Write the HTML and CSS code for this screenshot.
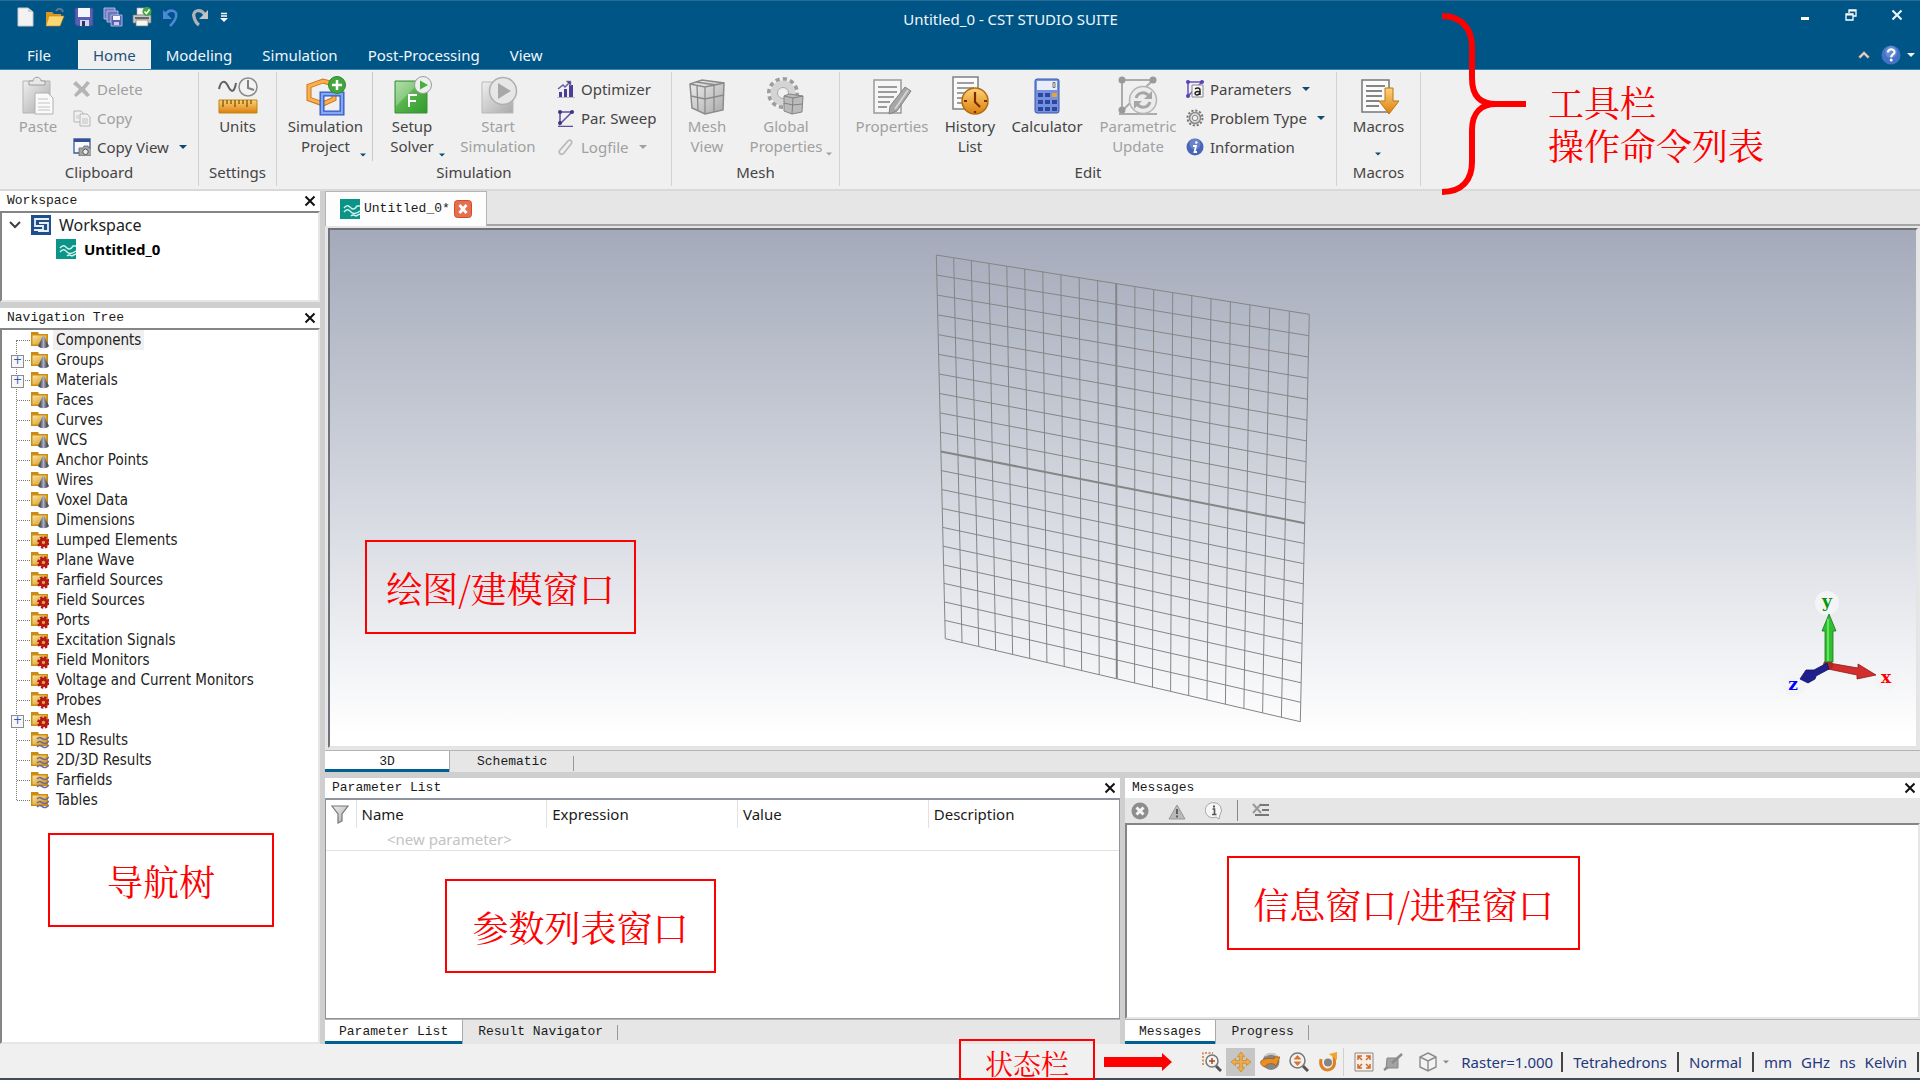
FILE: index.html
```html
<!DOCTYPE html>
<html lang="zh-CN">
<head>
<meta charset="utf-8">
<title>Untitled_0 - CST STUDIO SUITE</title>
<link rel="stylesheet" href="styles.css">
</head>
<body>
<svg class="sprite" aria-hidden="true">
  <defs>
    <linearGradient id="g-gold" x1="0" y1="0" x2="1" y2="1"><stop offset="0" stop-color="#fae7a4"/><stop offset="1" stop-color="#d3900f"/></linearGradient>
    <linearGradient id="g-grey" x1="0" y1="0" x2="1" y2="1"><stop offset="0" stop-color="#efefef"/><stop offset="1" stop-color="#a9a9a9"/></linearGradient>
    <linearGradient id="g-green" x1="0" y1="0" x2="1" y2="1"><stop offset="0" stop-color="#9ad68f"/><stop offset=".5" stop-color="#53b148"/><stop offset="1" stop-color="#2f9a2a"/></linearGradient>
    <linearGradient id="g-orange" x1="0" y1="0" x2="0" y2="1"><stop offset="0" stop-color="#ffd27a"/><stop offset="1" stop-color="#dc7f0c"/></linearGradient>
    <linearGradient id="g-cone" x1="0" y1="0" x2="1" y2="0"><stop offset="0" stop-color="#43444e"/><stop offset=".25" stop-color="#5c5e6c"/><stop offset=".5" stop-color="#aab0c8"/><stop offset=".75" stop-color="#5c5e6c"/><stop offset="1" stop-color="#3d3e48"/></linearGradient>
  </defs>
  <symbol id="i-new" viewBox="0 0 20 20"><path d="M2 1h10l5 4v14H2z" fill="#f2f2f2" stroke="#c9c9c9"/><path d="M12 1v4h5z" fill="#cfcfcf"/></symbol>
  <symbol id="i-open" viewBox="0 0 20 20"><path d="M1 18V5h6l2 2h7v11z" fill="#d9981d"/><path d="M4 9h15l-4 10H1z" fill="#fbd774" stroke="#c98a16" stroke-width=".6"/><path d="M11 4c2-3 6-3 7 1" fill="none" stroke="#5e7a92" stroke-width="2"/></symbol>
  <symbol id="i-save" viewBox="0 0 20 20"><path d="M1 1h18v18H3l-2-2z" fill="#5660b4" stroke="#3d4790"/><path d="M4 1h12v9H4z" fill="#f4f4fb"/><path d="M6 13h9v6H6z" fill="#d4d7ea"/><path d="M8 14h3v5H8z" fill="#2b336f"/></symbol>
  <symbol id="i-saveall" viewBox="0 0 20 20"><g stroke="#c6cbea" stroke-width=".8"><path d="M1 1h11v11H1z" fill="#6c76bd"/><path d="M4 4h11v11H4z" fill="#6c76bd"/><path d="M8 8h11v11H8z" fill="#5660b4"/></g><path d="M10 9h7v4h-7z" fill="#f4f4fb"/><path d="M11 15h5v3h-5z" fill="#c9cde8"/></symbol>
  <symbol id="i-print" viewBox="0 0 20 20"><path d="M5 1h9v7H5z" fill="#f5f5f5" stroke="#aaa" stroke-width=".6"/><path d="M1 8h18v8H1z" fill="#c9c9c9" stroke="#777" stroke-width=".7"/><path d="M4 13h12v6H4z" fill="#f7f7ef" stroke="#777" stroke-width=".7"/><path d="M3 10h14v2H3z" fill="#666"/><circle cx="15" cy="4.500" r="4.500" fill="#45a640"/><path d="M12.500 4.500l2 2 3-4" fill="none" stroke="#fff" stroke-width="1.500"/></symbol>
  <symbol id="i-undo" viewBox="0 0 20 20"><path d="M4 8C8 1 17 3 15 10c-1 4-3 6-6 9" fill="none" stroke="#4f86da" stroke-width="2.600"/><path d="M2 3v9h9z" fill="#4f86da"/></symbol>
  <symbol id="i-redo" viewBox="0 0 20 20"><path d="M15 8C11 1 2 3 4 10c1 4 2 6 5 8" fill="none" stroke="#b2b2b2" stroke-width="3.200"/><path d="M18 3v9H9z" fill="#c4c4c4"/></symbol>
  <symbol id="i-more" viewBox="0 0 10 10"><path d="M2 1.500h6M2 4h6" stroke="#fff" stroke-width="1.300"/><path d="M1 6h8l-4 4z" fill="#fff"/></symbol>
  <symbol id="i-min" viewBox="0 0 12 12"><path d="M2 8h8v3H2z" fill="#fff"/></symbol>
  <symbol id="i-restore" viewBox="0 0 12 12"><path d="M4 4V1h7v6H8M1 5h7v6H1z" fill="none" stroke="#fff" stroke-width="1.300"/><path d="M4 1h7v1.500H4zM1 5h7v1.500H1z" fill="#fff"/></symbol>
  <symbol id="i-x" viewBox="0 0 12 12"><path d="M1.500 1.500l9 9m0-9l-9 9" fill="none" stroke="currentColor" stroke-width="2"/></symbol>
  <symbol id="i-collapse" viewBox="0 0 12 8"><path d="M1 7l5-5 5 5" fill="none" stroke="#5f5f5f" stroke-width="3.500"/><path d="M1.500 6.500L6 2l4.500 4.500" fill="none" stroke="#cfd9e0" stroke-width="2"/></symbol>
  <symbol id="i-help" viewBox="0 0 20 20"><circle cx="10" cy="10" r="9.500" fill="#4472c4"/><circle cx="10" cy="7" r="6" fill="#7b9ddc" opacity=".6"/><path d="M7 7.500c0-4 6.500-4 6.500-.5 0 2.500-3.300 2.300-3.300 5.200" fill="none" stroke="#fff" stroke-width="2.200"/><circle cx="10.200" cy="15" r="1.500" fill="#fff"/></symbol>
  <symbol id="i-arrow" viewBox="0 0 8 4"><path d="M0 0h8L4 4z" fill="currentColor"/></symbol>
  <symbol id="i-paste" viewBox="0 0 40 40"><path d="M5 5h27v32H5z" fill="url(#g-grey)" stroke="#b5b5b5"/><path d="M11 9V5h4c0-5 8-5 8 0h4v4z" fill="#e8e8e8" stroke="#9d9d9d"/><path d="M17 17h13l5 5v16H17z" fill="#fafafa" stroke="#b0b0b0"/><path d="M20 23h10m-10 4h12m-12 4h12m-12 3h12" stroke="#c2c2c2"/></symbol>
  <symbol id="i-delete" viewBox="0 0 18 18"><path d="M3 1l6 6 5-6 3 2-5 6 5 6-3 2-5-5-6 5-2-2 5-6-6-5z" fill="#b4b4b4"/></symbol>
  <symbol id="i-copy" viewBox="0 0 18 18"><g fill="#f1f1f1" stroke="#b5b5b5"><path d="M1 2h7l3 3v8H1z"/><path d="M7 5h7l3 3v9H7z"/></g><path d="M3 7h3m-3 2h3m3 1h6m-6 2h6m-6 2h6" stroke="#c2c2c2"/></symbol>
  <symbol id="i-copyview" viewBox="0 0 18 18"><path d="M1 1h16v14H1z" fill="#f6f8fc" stroke="#3f5a9e" stroke-width="1.300"/><path d="M1 1h16v3H1z" fill="#35508f"/><path d="M6 10h4l1-2h4l1 2h3v8H6z" fill="#a5a5a5" stroke="#666" stroke-width=".8"/><circle cx="12.500" cy="13.800" r="2.700" fill="#eee" stroke="#555"/></symbol>
  <symbol id="i-units" viewBox="0 0 40 40"><path d="M1 13C3 4 7 4 10 10s6 8 8-3" fill="none" stroke="#606060" stroke-width="2"/><circle cx="30" cy="11" r="9" fill="#f2f2f2" stroke="#8a8a8a" stroke-width="1.500"/><path d="M30 4v8l6 2" fill="none" stroke="#808080" stroke-width="2"/><path d="M1 24h38v13H1z" fill="url(#g-orange)" stroke="#bd8713"/><path d="M5 24v7m4-7v4m4-4v4m4-4v7m4-7v4m4-4v4m4-4v7m4-7v4" stroke="#7a570a" stroke-width="1.300"/></symbol>
  <symbol id="i-simproj" viewBox="0 0 40 40"><path d="M3 10l14-5 11 3v15l-11 5-14-5z" fill="none" stroke="#c9761a" stroke-width="5"/><path d="M3 10l14-5 11 3v15l-11 5-14-5z" fill="none" stroke="#fbb04e" stroke-width="3"/><path d="M16 18h20v19H16z" fill="none" stroke="#2f59c9" stroke-width="5"/><path d="M16 18h20v19H16z" fill="none" stroke="#88a7f2" stroke-width="2.400"/><circle cx="31" cy="9" r="8.500" fill="#43a63c" stroke="#2f8a2b"/><path d="M31 4v10m-5-5h10" stroke="#fff" stroke-width="2.500"/></symbol>
  <symbol id="i-setup" viewBox="0 0 40 40"><path d="M3 5h32v32H3z" fill="url(#g-green)" stroke="#3c8d38"/><path d="M4 6h24L4 30z" fill="#fff" opacity=".25"/><path d="M17 31V19h8M17 25h7" fill="none" stroke="#fff" stroke-width="2"/><circle cx="31" cy="9" r="8.500" fill="#eee" stroke="#9b9b9b"/><path d="M28 4.500v9l8-4.500z" fill="#43b13a"/></symbol>
  <symbol id="i-start" viewBox="0 0 40 40"><path d="M4 6h31v31H4z" fill="url(#g-grey)" stroke="#b9b9b9"/><circle cx="25" cy="15" r="13.500" fill="#e6e6e6" stroke="#b0b0b0" stroke-width="1.500"/><path d="M20 7v16l13-8z" fill="#a8a8a8"/></symbol>
  <symbol id="i-optimizer" viewBox="0 0 18 18"><path d="M2 12h3v5H2zm5-3h3v8H7zm5-4h4v12h-4z" fill="#4a3f94"/><path d="M1 9l5-4 2 2 4-4" fill="none" stroke="#6a5aa8" stroke-width="1.500"/><path d="M9 1h5v5zM0 17.500h18" fill="#4a3f94" stroke="#999" stroke-width=".6"/></symbol>
  <symbol id="i-sweep" viewBox="0 0 18 18"><path d="M3 3h12L3 15zM1 17.500h15" fill="none" stroke="#5a4fa0" stroke-width="1.500"/><circle cx="3" cy="3" r="2" fill="#40367f"/><circle cx="15" cy="3" r="2" fill="#40367f"/><circle cx="3" cy="14" r="2" fill="#40367f"/></symbol>
  <symbol id="i-clip" viewBox="0 0 18 18"><path d="M4 11l7-8c2-2 5 0 3 3l-7 9c-3 3-6 0-4-3l7-8" fill="none" stroke="#b9b9b9" stroke-width="1.700"/></symbol>
  <symbol id="i-mesh" viewBox="0 0 40 40"><path d="M3 8l12-4 22 3-1 27-18 4L5 32z" fill="url(#g-grey)" stroke="#8c8c8c" stroke-width="1.500"/><path d="M3 8l15 3 19-4M18 11v27M4 20l14 3 19-4M9 6l20 3m-2 0v27M10 10l1 24" fill="none" stroke="#8a8a8a" stroke-width="1.300"/></symbol>
  <symbol id="i-gmesh" viewBox="0 0 40 40"><circle cx="17" cy="17" r="13.500" fill="none" stroke="#9d9d9d" stroke-width="5" stroke-dasharray="4 3"/><circle cx="17" cy="17" r="9" fill="none" stroke="#d4d4d4" stroke-width="7"/><circle cx="17" cy="17" r="5.500" fill="#f0f0f0" stroke="#a9a9a9"/><path d="M18 20l5-2 14 2-1 16-10 2-8-3z" fill="#bbb" stroke="#858585"/><path d="M18 20l9 2 10-2m-10 2l-1 16m-8-11l9 2 9-1" fill="none" stroke="#808080"/></symbol>
  <symbol id="i-props" viewBox="0 0 40 40"><path d="M2 4h27v33H2z" fill="#f6f6f6" stroke="#9b9b9b" stroke-width="1.500"/><path d="M6 11h19M6 16h19M6 21h16M6 26h12M6 31h9" stroke="#9b9b9b" stroke-width="2"/><path d="M33 11l6 4-14 20-8 3 1-8z" fill="#a6a6a6" stroke="#858585"/><path d="M36 14L23 33" stroke="#d3d3d3" stroke-width="2"/></symbol>
  <symbol id="i-history" viewBox="0 0 40 40"><path d="M3 1h25v32H3z" fill="#fbfbfb" stroke="#808080" stroke-width="1.500"/><path d="M7 7h17M7 12h17M7 17h10M7 22h7M7 27h7" stroke="#808080" stroke-width="1.600"/><circle cx="25" cy="25" r="13" fill="url(#g-orange)" stroke="#b26c10" stroke-width="1.500"/><path d="M25 16v10l5 5M14 25h3m17 0h3M25 35v2" fill="none" stroke="#7c2d00" stroke-width="2.200"/></symbol>
  <symbol id="i-calc" viewBox="0 0 40 40"><rect x="8" y="3" width="24" height="34" rx="2" fill="#7492e0" stroke="#3454a8"/><path d="M10 5h20v9H10z" fill="#e9edf9"/><path d="M26 6.500h2v5h-2z" fill="none" stroke="#555" stroke-width=".8"/><g fill="#2c479c"><path d="M11 17h5v4h-5zM18 17h5v4h-5zM11 24h5v4h-5zM18 24h5v4h-5zM25 24h5v4h-5zM11 31h5v4h-5zM18 31h5v4h-5zM25 31h5v4h-5z"/></g><path d="M25 17h5v4h-5z" fill="#efa02c"/></symbol>
  <symbol id="i-param-update" viewBox="0 0 40 40"><path d="M4 4h31L4 35zM1 38h38" fill="none" stroke="#ababab" stroke-width="2"/><g fill="#999"><circle cx="4" cy="4" r="3.500"/><circle cx="35" cy="4" r="3.500"/><circle cx="4" cy="34" r="3.500"/></g><circle cx="25" cy="24" r="13.500" fill="#ececec" stroke="#b5b5b5" stroke-width="1.500"/><path d="M18 22c2-6 9-7 13-2m1 6c-2 6-9 7-13 2" fill="none" stroke="#a6a6a6" stroke-width="3"/><path d="M34 15v8h-8zM16 33v-8h8z" fill="#a6a6a6"/></symbol>
  <symbol id="i-params" viewBox="0 0 18 18"><path d="M2 2h14L2 16z" fill="none" stroke="#6a50bd" stroke-width="1.500"/><circle cx="2" cy="2" r="2" fill="#5b3fb5"/><circle cx="16" cy="2" r="2" fill="#5b3fb5"/><circle cx="2" cy="16" r="2" fill="#5b3fb5"/><path d="M6 5h11v12H6z" fill="#f6f6f6" stroke="#888"/><path d="M9 9c2-1.500 5-1.500 5 1v5m0-3c-3-1-5 0-5 1.500S12 16 14 13" fill="none" stroke="#222" stroke-width="1.500"/></symbol>
  <symbol id="i-gear" viewBox="0 0 18 18"><circle cx="9" cy="9" r="7.500" fill="none" stroke="#777" stroke-width="2" stroke-dasharray="2.200 1.730"/><circle cx="9" cy="9" r="5.500" fill="#ddd" stroke="#888" stroke-width="1.500"/><circle cx="9" cy="9" r="2.700" fill="#f0f0f0" stroke="#888"/></symbol>
  <symbol id="i-info" viewBox="0 0 18 18"><circle cx="9" cy="9" r="8.500" fill="#4a64b8"/><circle cx="9" cy="6" r="5.500" fill="#8ea2dc" opacity=".5"/><path d="M7 8h3l-1.500 6H11" fill="none" stroke="#fff" stroke-width="1.800"/><circle cx="10.300" cy="4.500" r="1.300" fill="#fff"/></symbol>
  <symbol id="i-macros" viewBox="0 0 40 40"><path d="M3 4h27v32H3z" fill="#fbfbfb" stroke="#777" stroke-width="1.500"/><path d="M7 10h19M7 15h16M7 20h16M7 25h13M7 30h13" stroke="#858585" stroke-width="2"/><path d="M26 12h8v13h6L30 38 20 25h6z" fill="url(#g-orange)" stroke="#bd7513"/></symbol>
  <symbol id="i-cst" viewBox="0 0 20 20"><path d="M0 0h20v20H0z" fill="#1f4e8c"/><path d="M18 4H4v7h8v4H3M8 8h9v8H7" fill="none" stroke="#e8eff8" stroke-width="1.800"/></symbol>
  <symbol id="i-wave" viewBox="0 0 20 20"><path d="M0 0h20v20H0z" fill="#0b9488"/><path d="M4 9c3-4 5-2 7 0s4 1 6-2h3M4 13c3-4 5-2 7 0s5 2 9-1M11 17c2-2 3-1 5 0l4-2" fill="none" stroke="#d6f2ee" stroke-width="1.400"/></symbol>
  <symbol id="i-chevron" viewBox="0 0 12 8"><path d="M1 1l5 5 5-5" fill="none" stroke="#404040" stroke-width="2"/></symbol>
  <symbol id="i-folder" viewBox="0 0 18 18"><path d="M0 3V1h7l1 2h9v12H0z" fill="#c98b12"/><path d="M1 4h15v10H1z" fill="url(#g-gold)" stroke="#cf8f15"/></symbol>
  <symbol id="i-f-cone" viewBox="0 0 18 18"><use href="#i-folder"/><path d="M12.500 4L18 15c-2 3-9 3-11 0z" fill="url(#g-cone)"/></symbol>
  <symbol id="i-f-gear" viewBox="0 0 18 18"><use href="#i-folder"/><circle cx="12.500" cy="11.500" r="5" fill="none" stroke="#b5171a" stroke-width="2.600" stroke-dasharray="2.300 1.627"/><circle cx="12.500" cy="11.500" r="3.200" fill="none" stroke="#b5171a" stroke-width="3"/></symbol>
  <symbol id="i-f-wave" viewBox="0 0 18 18"><use href="#i-folder"/><path d="M6 8c3-3 4-1 6 0s3 1 6-2M6 12c3-3 4-1 6 0s3 1 6-2M6 16c3-3 4-1 6 0s3 1 6-2" fill="none" stroke="#6d6a9b" stroke-width="1.500"/></symbol>
  <symbol id="i-closetab" viewBox="0 0 18 18"><rect x=".5" y=".5" width="17" height="17" rx="3" fill="#e5704e" stroke="#d2492e"/><path d="M5.500 5l7 8m0-8l-7 8" stroke="#fff" stroke-width="2.800"/></symbol>
  <symbol id="i-filter" viewBox="0 0 18 20"><path d="M1 2h16l-6 8v7l-4 2v-9z" fill="url(#g-grey)" stroke="#777" stroke-width="1.200"/></symbol>
  <symbol id="i-error" viewBox="0 0 18 18"><circle cx="9" cy="9" r="8.500" fill="#8d8d8d"/><path d="M5.500 5.500l7 7m0-7l-7 7" stroke="#f4f4f4" stroke-width="3"/></symbol>
  <symbol id="i-warn" viewBox="0 0 18 18"><path d="M9 3l8 14H1z" fill="#b9b9b9" stroke="#989898"/><path d="M9 7v5m0 1.500v2" stroke="#555" stroke-width="1.800"/></symbol>
  <symbol id="i-note" viewBox="0 0 18 18"><path d="M9 .8a7.500 7.500 0 016 12L14 17l-3-2A7.500 7.500 0 119 .8z" fill="#f7f7f7" stroke="#a5a5a5"/><path d="M7.500 7H9.500v5M7 12.500h4.500" fill="none" stroke="#555" stroke-width="1.600"/><path d="M8 3.500h2v2H8z" fill="#555"/></symbol>
  <symbol id="i-clear" viewBox="0 0 18 16"><path d="M1 1l8 9m0-9L1 10" stroke="#999" stroke-width="2"/><path d="M8 2h9M10 7h7M3 12h14" stroke="#777" stroke-width="2.200"/></symbol>
  <symbol id="i-zoomrect" viewBox="0 0 20 20"><path d="M1 13V1h10" fill="none" stroke="#c9793a" stroke-width="1.500" stroke-dasharray="2 1.500"/><path d="M14 14l5 5" stroke="#555" stroke-width="3"/><circle cx="10" cy="9" r="6" fill="#f2f2f2" stroke="#777" stroke-width="1.500"/><path d="M10 6v6M7 9h6" stroke="#a24b1c" stroke-width="1.500"/></symbol>
  <symbol id="i-pan" viewBox="0 0 22 22"><path d="M11 0l4 5h-2.500v4.500H17V7l5 4-5 4v-2.500h-4.500V17H15l-4 5-4-5h2.500v-4.500H5V15l-5-4 5-4v2.500h4.500V5H7z" fill="#f0ad45" stroke="#c98526" stroke-width=".8"/></symbol>
  <symbol id="i-rotate" viewBox="0 0 20 20"><circle cx="11" cy="9.500" r="8.500" fill="#858585"/><path d="M5 4c4-3 8-3 12 0" stroke="#ccc" stroke-width="2" fill="none"/><path d="M1 9c4-3 9-3 13-2V5l6 0-4 9-2-2c-4-1-8 0-9 3-4-1-5-4-4-6z" fill="#e88e25" stroke="#a55c10" stroke-width=".8"/></symbol>
  <symbol id="i-zoomud" viewBox="0 0 20 20"><path d="M13 13l6 6" stroke="#555" stroke-width="3"/><circle cx="8.500" cy="8.500" r="7.500" fill="#f2f2f2" stroke="#777" stroke-width="1.500"/><path d="M8.500 3l4 4.500h-8zM8.500 14l4-4.500h-8z" fill="#d8742a"/></symbol>
  <symbol id="i-spin" viewBox="0 0 20 20"><path d="M3 7C0 21 17 21 16.500 10L16 4" fill="none" stroke="#e07f22" stroke-width="3"/><path d="M11 2l8-2v8z" fill="#f0a52f"/><circle cx="10" cy="10.500" r="4" fill="#858585"/></symbol>
  <symbol id="i-fit" viewBox="0 0 20 20"><path d="M1 1h18v18H1z" fill="#f6efe8" stroke="#888"/><path d="M4 4l4 4m8-4l-4 4M4 16l4-4m8 4l-4-4M4 8V4h4m4 0h4v4M4 12v4h4m4 0h4v-4" fill="none" stroke="#cf6a28" stroke-width="1.500"/></symbol>
  <symbol id="i-plane" viewBox="0 0 20 20"><path d="M4 6h11v10H3z" fill="#a3a3a3" stroke="#888"/><path d="M9 11l10-9M1 18l4-3" stroke="#8b8b8b" stroke-width="2.500"/></symbol>
  <symbol id="i-cube" viewBox="0 0 20 20"><path d="M10 1l8 4v10l-8 4-8-4V5zM2 5l8 4 8-4M10 9v10" fill="#f3f3f3" stroke="#8b8b8b" stroke-width="1.400"/></symbol>
</svg>

<header class="app-head">
  <div class="titlebar">
    <div class="quick">
      <button aria-label="New"><svg><use href="#i-new"/></svg></button>
      <button aria-label="Open"><svg><use href="#i-open"/></svg></button>
      <button aria-label="Save"><svg><use href="#i-save"/></svg></button>
      <button aria-label="Save all"><svg><use href="#i-saveall"/></svg></button>
      <button aria-label="Print"><svg><use href="#i-print"/></svg></button>
      <button aria-label="Undo"><svg><use href="#i-undo"/></svg></button>
      <button aria-label="Redo"><svg><use href="#i-redo"/></svg></button>
      <button class="quick-more" aria-label="More"><svg><use href="#i-more"/></svg></button>
    </div>
    <h1 class="title">Untitled_0 - CST STUDIO SUITE</h1>
    <div class="window-buttons">
      <button aria-label="Minimize"><svg><use href="#i-min"/></svg></button>
      <button aria-label="Restore"><svg><use href="#i-restore"/></svg></button>
      <button aria-label="Close"><svg><use href="#i-x"/></svg></button>
    </div>
  </div>
  <nav class="ribbon-tabs">
    <button class="file-tab">File</button>
    <button class="active">Home</button>
    <button>Modeling</button>
    <button>Simulation</button>
    <button>Post-Processing</button>
    <button>View</button>
    <div class="help-tools">
      <button aria-label="Collapse ribbon"><svg class="collapse"><use href="#i-collapse"/></svg></button>
      <button aria-label="Help"><svg class="help"><use href="#i-help"/></svg></button>
      <button aria-label="Help menu"><svg class="arrow"><use href="#i-arrow"/></svg></button>
    </div>
  </nav>
</header>

<section class="ribbon">
  <div class="group clipboard">
    <div class="tools">
      <button class="big" disabled><svg><use href="#i-paste"/></svg><span>Paste</span></button>
      <div class="small-col">
        <button class="small" disabled><svg><use href="#i-delete"/></svg>Delete</button>
        <button class="small" disabled><svg><use href="#i-copy"/></svg>Copy</button>
        <button class="small"><svg><use href="#i-copyview"/></svg>Copy View<svg class="arrow"><use href="#i-arrow"/></svg></button>
      </div>
    </div>
    <h2>Clipboard</h2>
  </div>
  <div class="group settings">
    <div class="tools"><button class="big"><svg><use href="#i-units"/></svg><span>Units</span></button></div>
    <h2>Settings</h2>
  </div>
  <div class="group simulation">
    <div class="tools">
      <button class="big split"><svg><use href="#i-simproj"/></svg><span>Simulation<br>Project</span><svg class="arrow"><use href="#i-arrow"/></svg></button>
      <button class="big"><svg><use href="#i-setup"/></svg><span>Setup<br>Solver</span><svg class="arrow"><use href="#i-arrow"/></svg></button>
      <button class="big" disabled><svg><use href="#i-start"/></svg><span>Start<br>Simulation</span></button>
      <div class="small-col">
        <button class="small"><svg><use href="#i-optimizer"/></svg>Optimizer</button>
        <button class="small"><svg><use href="#i-sweep"/></svg>Par. Sweep</button>
        <button class="small" disabled><svg><use href="#i-clip"/></svg>Logfile<svg class="arrow"><use href="#i-arrow"/></svg></button>
      </div>
    </div>
    <h2>Simulation</h2>
  </div>
  <div class="group mesh">
    <div class="tools">
      <button class="big" disabled><svg><use href="#i-mesh"/></svg><span>Mesh<br>View</span></button>
      <button class="big" disabled><svg><use href="#i-gmesh"/></svg><span>Global<br>Properties</span><svg class="arrow"><use href="#i-arrow"/></svg></button>
    </div>
    <h2>Mesh</h2>
  </div>
  <div class="group edit">
    <div class="tools">
      <button class="big" disabled><svg><use href="#i-props"/></svg><span>Properties</span></button>
      <button class="big"><svg><use href="#i-history"/></svg><span>History<br>List</span></button>
      <button class="big"><svg><use href="#i-calc"/></svg><span>Calculator</span></button>
      <button class="big" disabled><svg><use href="#i-param-update"/></svg><span>Parametric<br>Update</span></button>
      <div class="small-col">
        <button class="small"><svg><use href="#i-params"/></svg>Parameters<svg class="arrow"><use href="#i-arrow"/></svg></button>
        <button class="small"><svg><use href="#i-gear"/></svg>Problem Type<svg class="arrow"><use href="#i-arrow"/></svg></button>
        <button class="small"><svg><use href="#i-info"/></svg>Information</button>
      </div>
    </div>
    <h2>Edit</h2>
  </div>
  <div class="group macros">
    <div class="tools"><button class="big"><svg><use href="#i-macros"/></svg><span>Macros</span><svg class="arrow"><use href="#i-arrow"/></svg></button></div>
    <h2>Macros</h2>
  </div>
</section>

<main class="workbench">
  <aside class="left-dock">
    <section class="panel workspace">
      <header class="panel-head"><h3>Workspace</h3><button aria-label="Close"><svg><use href="#i-x"/></svg></button></header>
      <ul class="well project-tree">
        <li><svg class="chevron"><use href="#i-chevron"/></svg><svg class="logo"><use href="#i-cst"/></svg>Workspace</li>
        <li class="project"><svg class="logo"><use href="#i-wave"/></svg>Untitled_0</li>
      </ul>
    </section>
    <section class="panel navigation">
      <header class="panel-head"><h3>Navigation Tree</h3><button aria-label="Close"><svg><use href="#i-x"/></svg></button></header>
      <div class="well">
        <ul class="nav-tree">
          <li class="selected"><svg><use href="#i-f-cone"/></svg><span>Components</span></li>
          <li class="closed"><svg><use href="#i-f-cone"/></svg><span>Groups</span></li>
          <li class="closed"><svg><use href="#i-f-cone"/></svg><span>Materials</span></li>
          <li><svg><use href="#i-f-cone"/></svg><span>Faces</span></li>
          <li><svg><use href="#i-f-cone"/></svg><span>Curves</span></li>
          <li><svg><use href="#i-f-cone"/></svg><span>WCS</span></li>
          <li><svg><use href="#i-f-cone"/></svg><span>Anchor Points</span></li>
          <li><svg><use href="#i-f-cone"/></svg><span>Wires</span></li>
          <li><svg><use href="#i-f-cone"/></svg><span>Voxel Data</span></li>
          <li><svg><use href="#i-f-cone"/></svg><span>Dimensions</span></li>
          <li><svg><use href="#i-f-gear"/></svg><span>Lumped Elements</span></li>
          <li><svg><use href="#i-f-gear"/></svg><span>Plane Wave</span></li>
          <li><svg><use href="#i-f-gear"/></svg><span>Farfield Sources</span></li>
          <li><svg><use href="#i-f-gear"/></svg><span>Field Sources</span></li>
          <li><svg><use href="#i-f-gear"/></svg><span>Ports</span></li>
          <li><svg><use href="#i-f-gear"/></svg><span>Excitation Signals</span></li>
          <li><svg><use href="#i-f-gear"/></svg><span>Field Monitors</span></li>
          <li><svg><use href="#i-f-gear"/></svg><span>Voltage and Current Monitors</span></li>
          <li><svg><use href="#i-f-gear"/></svg><span>Probes</span></li>
          <li class="closed"><svg><use href="#i-f-gear"/></svg><span>Mesh</span></li>
          <li><svg><use href="#i-f-wave"/></svg><span>1D Results</span></li>
          <li><svg><use href="#i-f-wave"/></svg><span>2D/3D Results</span></li>
          <li><svg><use href="#i-f-wave"/></svg><span>Farfields</span></li>
          <li><svg><use href="#i-f-wave"/></svg><span>Tables</span></li>
        </ul>
        <p class="callout callout-nav">导航树</p>
      </div>
    </section>
  </aside>

  <div class="right-dock">
    <section class="document">
      <div class="doc-tabs">
        <div class="doc-tab"><svg class="logo"><use href="#i-wave"/></svg><span>Untitled_0*</span><button aria-label="Close document"><svg><use href="#i-closetab"/></svg></button></div>
      </div>
      <div class="viewport">
        <svg class="plane" viewBox="913 238 420 500" id="plane" aria-label="Working plane"></svg>
        <svg class="axes" viewBox="1780 585 120 110" aria-label="Axes">
          <g fill="#f4f4f6"><circle cx="1827" cy="600" r="12"/><circle cx="1886" cy="675" r="12"/><circle cx="1794" cy="681" r="12"/></g>
          <path d="M1829 660l29 5v-4l18 11-19 4v-4l-29-6z" fill="#d22e2e" stroke="#8c1a1a" stroke-width=".8"/>
          <circle cx="1828" cy="662" r="5" fill="#b32424"/>
          <path d="M1827 660l-13 7-8 0-6 9 8 4 7-4 1-3 13-7z" fill="#20208c" stroke="#121260" stroke-width=".8"/>
          <path d="M1825 659v-31h-3l7-17 7 17h-3v31z" fill="#2fbf2f" stroke="#1a761a" stroke-width=".8"/>
          <path d="M1828 658v-42" stroke="#74f074" stroke-width="1.500"/>
          <text x="1827" y="604" fill="#0a960a">y</text><text x="1886" y="680" fill="#f00">x</text><text x="1793" y="687" fill="#00f">z</text>
        </svg>
        <p class="callout callout-view">绘图/建模窗口</p>
      </div>
      <div class="bottom-tabs"><button class="active">3D</button><button>Schematic</button></div>
    </section>

    <section class="panel parameters">
      <header class="panel-head"><h3>Parameter List</h3><button aria-label="Close"><svg><use href="#i-x"/></svg></button></header>
      <div class="table-well">
        <table>
          <thead><tr><th class="filter"><svg><use href="#i-filter"/></svg></th><th>Name</th><th>Expression</th><th>Value</th><th>Description</th></tr></thead>
          <tbody><tr><td></td><td class="placeholder">&lt;new parameter&gt;</td><td></td><td></td><td></td></tr></tbody>
        </table>
        <p class="callout callout-param">参数列表窗口</p>
      </div>
      <div class="bottom-tabs"><button class="active">Parameter List</button><button>Result Navigator</button></div>
    </section>

    <section class="panel messages">
      <header class="panel-head"><h3>Messages</h3><button aria-label="Close"><svg><use href="#i-x"/></svg></button></header>
      <div class="message-tools">
        <button aria-label="Errors"><svg><use href="#i-error"/></svg></button>
        <button aria-label="Warnings"><svg><use href="#i-warn"/></svg></button>
        <button aria-label="Information"><svg><use href="#i-note"/></svg></button>
        <button class="clear" aria-label="Clear"><svg><use href="#i-clear"/></svg></button>
      </div>
      <div class="well"><p class="callout callout-msg">信息窗口/进程窗口</p></div>
      <div class="bottom-tabs"><button class="active">Messages</button><button>Progress</button></div>
    </section>
  </div>
</main>

<footer class="statusbar">
  <div class="view-tools">
    <button aria-label="Zoom region"><svg><use href="#i-zoomrect"/></svg></button>
    <button class="on" aria-label="Pan"><svg><use href="#i-pan"/></svg></button>
    <button aria-label="Rotate"><svg><use href="#i-rotate"/></svg></button>
    <button aria-label="Zoom"><svg><use href="#i-zoomud"/></svg></button>
    <button aria-label="Rotate in plane"><svg><use href="#i-spin"/></svg></button>
    <button class="ruled" aria-label="Fit view"><svg><use href="#i-fit"/></svg></button>
    <button aria-label="Working plane"><svg><use href="#i-plane"/></svg></button>
    <button class="cube" aria-label="View cube"><svg><use href="#i-cube"/></svg><svg class="arrow"><use href="#i-arrow"/></svg></button>
  </div>
  <span class="cell raster">Raster=1.000</span>
  <span class="cell">Tetrahedrons</span>
  <span class="cell">Normal</span>
  <span class="cell units"><span>mm</span><span>GHz</span><span>ns</span><span>Kelvin</span></span>
  <p class="callout callout-status">状态栏</p>
  <svg class="status-arrow" viewBox="0 0 68 18"><path d="M0 4h58V0l10 9-10 9v-4H0z" fill="#f00"/></svg>
</footer>

<div class="toolbar-note">
  <svg viewBox="0 0 84 184"><path d="M0 4C20 4 30 18 30 34v32C30 86 40 92 54 92h30M54 92C40 92 30 100 30 118v32c0 18-10 30-30 30" fill="none" stroke="#f00" stroke-width="6"/></svg>
  <p>工具栏<br>操作命令列表</p>
</div>
<script src="plane.js"></script>
</body>
</html>
```
FILE: styles.css
```css
* { box-sizing: border-box; }
html, body { height: 100%; }
body {
  margin: 0;
  display: flex;
  flex-direction: column;
  position: relative;
  overflow: hidden;
  background: #f0f0f0;
  color: #1a1a1a;
  font: 15px/20px "Noto Sans", "Noto Sans CJK SC", sans-serif;
}
h1, h2, h3, p, ul { margin: 0; padding: 0; font-weight: normal; list-style: none; }
button { margin: 0; padding: 0; border: 0; background: none; color: inherit; font: inherit; white-space: nowrap; }
svg { display: block; flex: none; overflow: visible; }
.sprite { position: absolute; width: 0; height: 0; }
.arrow { width: 8px; height: 4px; }

/* Title bar and ribbon tabs */
.app-head { background: #005587; color: #f2f6f9; border-top: 1px solid #2a6a94; border-bottom: 1px solid #3b83ac; }
.titlebar { display: flex; height: 39px; padding-left: 16px; }
.quick { display: flex; gap: 9px; align-items: center; height: 31px; }
.quick svg { width: 20px; height: 20px; }
.quick .quick-more svg { width: 10px; height: 10px; }
.title { flex: 1; padding-left: 10px; text-align: center; font-size: 15px; line-height: 36px; }
.window-buttons { display: flex; height: 28px; }
.window-buttons button { width: 46px; display: grid; place-items: center; }
.window-buttons svg { width: 12px; height: 12px; }
.ribbon-tabs { display: flex; height: 29px; }
.ribbon-tabs > button { padding: 0 15px; }
.ribbon-tabs > .file-tab { width: 78px; }
.ribbon-tabs > .active { background: #f0f0f0; color: #1d4f7a; }
.help-tools { margin-left: auto; display: flex; align-items: center; padding-right: 5px; }
.help-tools button { padding-left: 6px; }
.help-tools .collapse { width: 12px; height: 8px; margin-right: 5px; }
.help-tools .help { width: 20px; height: 20px; }

/* Ribbon */
.ribbon { display: flex; height: 121px; padding-top: 2px; border-bottom: 2px solid #d9d9d9; color: #444; }
.group { display: flex; flex-direction: column; border-right: 1px solid #d2d2d2; margin-bottom: 3px; }
.group h2 { font-size: 15px; line-height: 20px; text-align: center; padding-top: 2px; }
.tools { display: grid; height: 88px; }
.big { position: relative; display: flex; flex-direction: column; align-items: center; padding-top: 4px; }
.big > svg { width: 40px; height: 40px; }
.big > .arrow { position: absolute; right: 6px; bottom: 4px; width: 6px; height: 4px; color: #0f4a70; }
.big.split { border-right: 1px solid #c8c8c8; }
.big:disabled, .small:disabled { color: #a0a0a0; }
.big:disabled > .arrow { color: #a0a0a0; }
.small-col { display: flex; flex-direction: column; padding-top: 2px; }
.small { display: flex; align-items: center; gap: 6px; height: 29px; }
.small > svg { width: 18px; height: 18px; }
.small > .arrow { width: 8px; height: 4px; margin-left: 4px; color: #0f4a70; }
.small:disabled > .arrow { color: #a0a0a0; }
.clipboard { width: 199px; }
.clipboard .tools { grid-template-columns: 70px 1fr; padding-left: 3px; }
.settings { width: 78px; }
.simulation { width: 395px; }
.simulation .tools { grid-template-columns: 94px 78px 106px 1fr; padding-left: 2px; }
.simulation .big:disabled { padding-right: 12px; }
.mesh { width: 168px; }
.mesh .tools { grid-template-columns: 62px 96px; padding-left: 4px; }
.mesh .big > .arrow { right: 2px; }
.edit { width: 497px; }
.edit .tools { grid-template-columns: 88px 68px 86px 96px 1fr; padding-left: 8px; }
.macros { width: 84px; }
.macros .big > .arrow { right: 39px; }

/* Docked panels */
.workbench { flex: 1; min-height: 0; display: grid; grid-template-columns: 320px 1fr; gap: 5px; background: #cfcfcf; }
.left-dock { display: flex; flex-direction: column; gap: 6px; min-height: 0; }
.right-dock { display: grid; grid-template-columns: 1fr 1fr; grid-template-rows: 1fr 266px; gap: 6px 5px; min-height: 0; }
.panel { display: flex; flex-direction: column; background: #fff; min-height: 0; min-width: 0; }
.panel-head { display: flex; align-items: center; justify-content: space-between; height: 20px; padding: 0 4px 0 7px; }
.panel-head svg { width: 12px; height: 12px; color: #111; }
.panel-head h3, .bottom-tabs, .doc-tab { font: 13px/20px "Liberation Mono", monospace; }
.well { position: relative; flex: 1; border: 2px solid #e6e6e6; border-top-color: #858585; border-left-color: #858585; background: #fff; }
.workspace { height: 111px; }
.navigation { flex: 1; }
.project-tree { font-size: 16px; color: #222; }
.project-tree li { display: flex; align-items: center; gap: 8px; height: 24px; padding-left: 7px; }
.project-tree .chevron { width: 12px; height: 8px; margin-right: 2px; }
.project-tree .project { padding-left: 54px; font-size: 15px; font-weight: bold; color: #000; }
.logo { width: 20px; height: 20px; }
.nav-tree { position: relative; font: 15px/20px "DejaVu Sans Condensed", "DejaVu Sans", sans-serif; }
.nav-tree::before { content: ""; position: absolute; left: 14px; top: 10px; bottom: 10px; border-left: 1px dotted #777; }
.nav-tree li { position: relative; display: flex; align-items: center; height: 20px; padding-left: 29px; gap: 4px; color: #222; }
.nav-tree li::before { content: ""; position: absolute; left: 15px; top: 10px; width: 13px; border-top: 1px dotted #777; }
.nav-tree .closed::after { content: "+"; position: absolute; left: 9px; top: 5px; width: 11px; height: 11px; border: 1px solid #8c8c8c; background: #f6f6f6; color: #2d57b3; font-size: 12px; line-height: 9px; text-align: center; }
.nav-tree svg { width: 18px; height: 18px; }
.nav-tree span { padding: 0 3px; }
.nav-tree .selected span { background: #f0f0f0; }

/* Document area */
.document { grid-column: 1 / -1; display: flex; flex-direction: column; background: #e6e6e6; min-height: 0; }
.doc-tabs { display: flex; height: 35px; border-bottom: 2px solid #a5a5a5; }
.doc-tab { display: flex; align-items: center; gap: 4px; width: 162px; height: 35px; padding-left: 14px; background: #fdfdfd; border: 1px solid #b4b4b4; border-bottom: 0; }
.doc-tab button svg { width: 18px; height: 18px; }
.viewport {
  position: relative; flex: 1; min-height: 0; margin: 2px 2px 2px 3px;
  display: flex; align-items: center; justify-content: center;
  border: 2px solid #6f7178; border-right-color: #e4e4e4; border-bottom-color: #e4e4e4;
  background: linear-gradient(#a4aaba, #d5d8e0 53%, #fff 98%);
}
.plane { width: 420px; height: 500px; fill: none; stroke: #858585; stroke-width: 1; }
.plane .axis { stroke-width: 2; }
.axes { position: absolute; right: 16px; bottom: 48px; width: 120px; height: 110px; font: bold 17px "DejaVu Serif", serif; text-anchor: middle; }
.bottom-tabs { display: flex; height: 25px; background: #e6e6e6; border-top: 1px solid #b4b4b4; }
.bottom-tabs button { padding: 0 15px; }
.bottom-tabs .active { padding: 0 14px; background: #fff; box-shadow: inset 0 -3px #005f93; border-right: 1px solid #aaa; }
.bottom-tabs button + button { position: relative; }
.bottom-tabs button + button::after { content: ""; position: absolute; right: 0; top: 5px; height: 15px; border-right: 1px solid #999; }
.document .bottom-tabs { height: 22px; }
.document .bottom-tabs button { padding: 0 27px; }
.document .bottom-tabs .active { width: 125px; }

/* Parameter table */
.table-well { position: relative; flex: 1; border: 1px solid #8f949c; border-top-width: 2px; }
table { width: 100%; border-collapse: collapse; table-layout: fixed; }
th { height: 28px; padding: 0 0 0 5px; text-align: left; font-weight: normal; border-right: 1px solid #e2e2e2; }
th:last-child { border-right: 0; }
.filter { width: 30px; }
.filter svg { width: 18px; height: 20px; }
td { height: 22px; padding: 0; border-bottom: 1px solid #e2e2e2; }
.placeholder { padding-left: 31px; color: #c3c3c3; white-space: nowrap; }

/* Messages */
.message-tools { display: flex; gap: 19px; height: 25px; align-items: center; padding-left: 6px; background: #e6e6e6; }
.message-tools svg { width: 18px; height: 18px; }
.message-tools .clear { margin-left: -5px; padding-left: 14px; border-left: 1px solid #888; height: 21px; }

/* Status bar */
.statusbar { position: relative; display: flex; align-items: center; justify-content: flex-end; height: 36px; padding-top: 1px; border-bottom: 2px solid #454b57; color: #24387c; }
.view-tools { display: flex; margin-right: 6px; }
.view-tools button { width: 29px; height: 28px; display: flex; align-items: center; justify-content: center; gap: 5px; }
.view-tools svg { width: 20px; height: 20px; }
.view-tools .on { background: #c6c6c6; }
.view-tools .ruled { width: 35px; margin-left: 1px; padding-left: 6px; border-left: 1px solid #d0d0d0; }
.view-tools .cube { width: 48px; padding-left: 4px; }
.view-tools .arrow { width: 6px; height: 4px; color: #888; }
.cell { padding: 0 10px; border-right: 2px solid #444; }
.raster { padding-left: 0; padding-right: 8px; }
.units { display: flex; gap: 9px; margin-right: 1px; }

/* Red annotations over the window */
.callout { position: absolute; display: grid; place-items: center; height: 94px; padding-top: 2px; border: 2px solid #f00; color: #f00; font: 36px/40px "Noto Serif CJK SC", "Noto Sans CJK SC", serif; white-space: nowrap; }
.callout-nav { left: 46px; top: 503px; width: 226px; }
.callout-view { left: 35px; bottom: 112px; width: 271px; }
.callout-param { left: 119px; top: 79px; width: 271px; }
.callout-msg { left: 100px; top: 31px; width: 353px; }
.callout-status { right: 825px; bottom: -2px; width: 136px; height: 41px; font-size: 28px; }
.status-arrow { position: absolute; right: 748px; top: 9px; width: 68px; height: 18px; }
.toolbar-note { position: absolute; top: 12px; right: 156px; display: flex; gap: 22px; color: #f00; font: 36px/43px "Noto Serif CJK SC", "Noto Sans CJK SC", serif; }
.toolbar-note svg { width: 84px; height: 184px; }
.toolbar-note p { padding-top: 68px; }
```
FILE: plane.js
```js
// Draws the 20 x 20 working plane in perspective: a unit square is mapped onto its four projected corners.
const [a, b, c, d] = [[936.3, 255], [1309.3, 314.3], [1300.3, 721.7], [945.3, 638.7]];
const dx1 = b[0] - c[0], dx2 = d[0] - c[0], sx = a[0] - b[0] + c[0] - d[0];
const dy1 = b[1] - c[1], dy2 = d[1] - c[1], sy = a[1] - b[1] + c[1] - d[1];
const det = dx1 * dy2 - dx2 * dy1;
const g = (sx * dy2 - dx2 * sy) / det;
const h = (dx1 * sy - sx * dy1) / det;

function project(u, v) {
  const w = g * u + h * v + 1;
  const x = (b[0] - a[0] + g * b[0]) * u + (d[0] - a[0] + h * d[0]) * v + a[0];
  const y = (b[1] - a[1] + g * b[1]) * u + (d[1] - a[1] + h * d[1]) * v + a[1];
  return (x / w).toFixed(1) + " " + (y / w).toFixed(1);
}

const plane = document.getElementById("plane");
for (let i = 0; i <= 20; i++) {
  const t = i / 20;
  const path = document.createElementNS("http://www.w3.org/2000/svg", "path");
  path.setAttribute("d", `M${project(t, 0)}L${project(t, 1)}M${project(0, t)}L${project(1, t)}`);
  if (i === 10) path.setAttribute("class", "axis");
  plane.append(path);
}
```
